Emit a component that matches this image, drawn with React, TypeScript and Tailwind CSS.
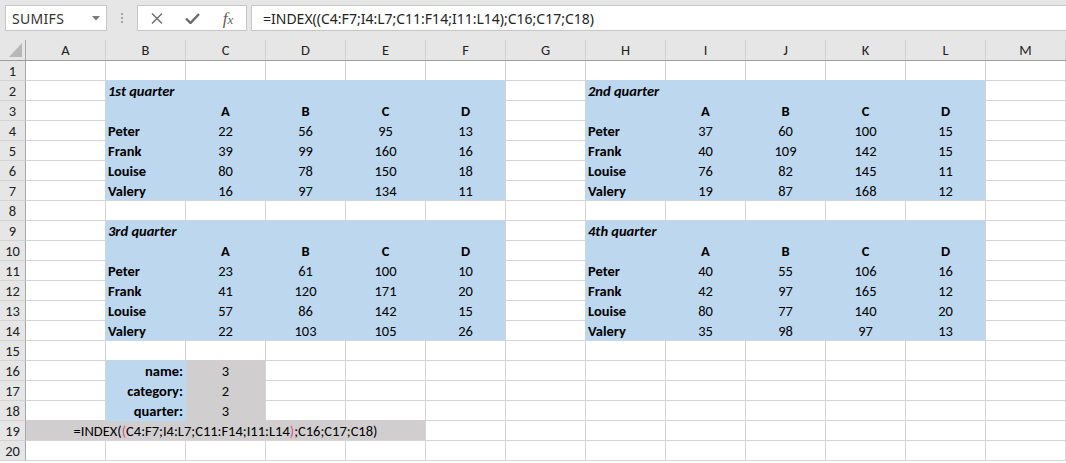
import React from "react";

type Fill = "blue" | "gray" | null;
type Cell = {
  text?: string;
  align?: "left" | "center" | "right";
  bold?: boolean;
  italic?: boolean;
  fill: Fill;
  span?: number;
  formula?: boolean;
  skip?: boolean;
};

const COLS = ["A", "B", "C", "D", "E", "F", "G", "H", "I", "J", "K", "L", "M"];
const NROWS = 20;

const bgClass: Record<string, string> = {
  blue: "bg-[#bdd7ee]",
  gray: "bg-[#d0cece]",
  none: "bg-white",
};
const rightClass: Record<string, string> = {
  blue: "border-r-[#bdd7ee]",
  gray: "border-r-[#d0cece]",
  none: "border-r-[#d4d4d4]",
};
const bottomClass: Record<string, string> = {
  blue: "border-b-[#bdd7ee]",
  gray: "border-b-[#d0cece]",
  none: "border-b-[#d4d4d4]",
};

function buildGrid(): Cell[][] {
  const g: Cell[][] = [];
  for (let r = 0; r < NROWS; r++) {
    const row: Cell[] = [];
    for (let c = 0; c < COLS.length; c++) row.push({ fill: null });
    g.push(row);
  }
  const put = (r: number, c: number, cell: Partial<Cell>) => {
    g[r - 1][c] = { ...g[r - 1][c], ...cell };
  };
  const table = (
    r0: number,
    c0: number,
    title: string,
    data: [string, number[]][]
  ) => {
    for (let r = r0; r < r0 + 6; r++)
      for (let c = c0; c < c0 + 5; c++) put(r, c, { fill: "blue" });
    put(r0, c0, { text: title, bold: true, italic: true, align: "left" });
    ["A", "B", "C", "D"].forEach((h, i) =>
      put(r0 + 1, c0 + 1 + i, { text: h, bold: true, align: "center" })
    );
    data.forEach(([name, vals], i) => {
      put(r0 + 2 + i, c0, { text: name, bold: true, align: "left" });
      vals.forEach((v, j) =>
        put(r0 + 2 + i, c0 + 1 + j, { text: String(v), align: "center" })
      );
    });
  };
  table(2, 1, "1st quarter", [
    ["Peter", [22, 56, 95, 13]],
    ["Frank", [39, 99, 160, 16]],
    ["Louise", [80, 78, 150, 18]],
    ["Valery", [16, 97, 134, 11]],
  ]);
  table(2, 7, "2nd quarter", [
    ["Peter", [37, 60, 100, 15]],
    ["Frank", [40, 109, 142, 15]],
    ["Louise", [76, 82, 145, 11]],
    ["Valery", [19, 87, 168, 12]],
  ]);
  table(9, 1, "3rd quarter", [
    ["Peter", [23, 61, 100, 10]],
    ["Frank", [41, 120, 171, 20]],
    ["Louise", [57, 86, 142, 15]],
    ["Valery", [22, 103, 105, 26]],
  ]);
  table(9, 7, "4th quarter", [
    ["Peter", [40, 55, 106, 16]],
    ["Frank", [42, 97, 165, 12]],
    ["Louise", [80, 77, 140, 20]],
    ["Valery", [35, 98, 97, 13]],
  ]);
  [
    ["name:", "3"],
    ["category:", "2"],
    ["quarter:", "3"],
  ].forEach(([l, v], i) => {
    put(16 + i, 1, { text: l, bold: true, align: "right", fill: "blue" });
    put(16 + i, 2, { text: v, align: "center", fill: "gray" });
  });
  put(19, 0, { fill: "gray", span: 5, formula: true, align: "center" });
  for (let c = 1; c < 5; c++) put(19, c, { fill: "gray", skip: true });
  return g;
}

const FONT = "font-['Carlito','Lato',sans-serif]";
const UIFONT = "font-['Noto_Sans','Open_Sans',sans-serif]";

function CellView({ cell, right, below }: { cell: Cell; right: Fill; below: Fill }) {
  const own = cell.fill;
  const rKey = own && right ? own : !own && right ? right : "none";
  const bKey = own && below ? own : !own && below ? below : "none";
  const justify =
    cell.align === "center"
      ? "justify-center"
      : cell.align === "right"
      ? "justify-end"
      : "justify-start";
  const span = cell.span === 5 ? "col-span-5" : "";
  return (
    <div
      className={`${span} border-r border-b ${rightClass[rKey]} ${bottomClass[bKey]} ${
        bgClass[own ?? "none"]
      } flex items-end ${justify} px-[2px] overflow-hidden whitespace-nowrap text-[14.5px] leading-[18px] text-black ${
        cell.bold ? "font-bold" : ""
      } ${cell.italic ? "italic" : ""}`}
    >
      {cell.formula ? (
        <span>
          =INDEX(<span className="text-[#e0577b]">(</span>C4:F7;I4:L7;C11:F14;I11:L14
          <span className="text-[#e0577b]">)</span>;C16;C17;C18)
        </span>
      ) : (
        cell.text
      )}
    </div>
  );
}

function Toolbar() {
  return (
    <div className={`h-[40px] bg-[#e6e6e6] flex items-start pt-[5px] ${UIFONT}`}>
      <div className="ml-[5px] w-[102px] h-[26px] bg-white border border-[#c6c6c6] flex items-center pl-[6px] pr-[6px] justify-between">
        <span className="text-[14px] text-[#333] tracking-[0.3px]">SUMIFS</span>
        <svg width="8" height="5" viewBox="0 0 8 5">
          <path d="M0 0 L8 0 L4 4.5 Z" fill="#7a7a7a" />
        </svg>
      </div>
      <div className="w-[30px] h-[26px] flex flex-col items-center justify-center gap-[2px]">
        <div className="w-[2px] h-[2px] bg-[#a6a6a6]" />
        <div className="w-[2px] h-[2px] bg-[#a6a6a6]" />
        <div className="w-[2px] h-[2px] bg-[#a6a6a6]" />
      </div>
      <div className="w-[110px] h-[26px] bg-white border border-[#c6c6c6] flex items-center">
        <div className="w-[36px] flex justify-center pl-[2px]">
          <svg width="12" height="11" viewBox="0 0 12 11">
            <path d="M1 0.5 L11 10.5 M11 0.5 L1 10.5" stroke="#6b6b6b" strokeWidth="1.4" />
          </svg>
        </div>
        <div className="w-[36px] flex justify-center">
          <svg width="15" height="11" viewBox="0 0 15 11">
            <path d="M1 5.5 L5.5 10 L14 1" stroke="#6b6b6b" strokeWidth="2.4" fill="none" />
          </svg>
        </div>
        <div className="w-[36px] flex justify-center">
          <span className="font-['Liberation_Serif',serif] italic text-[17px] text-[#5f5f5f] leading-none">
            f<span className="text-[13px]">x</span>
          </span>
        </div>
      </div>
      <div className="ml-[4px] flex-1 h-[26px] bg-white border-t border-b border-l border-[#c6c6c6] flex items-center pl-[11px]">
        <span className="text-[14px] text-[#222] whitespace-nowrap">
          =INDEX((C4:F7;I4:L7;C11:F14;I11:L14);C16;C17;C18)
        </span>
      </div>
    </div>
  );
}

export default function App() {
  const grid = buildGrid();
  return (
    <div className="w-[1066px] h-[463px] overflow-hidden bg-white">
      <Toolbar />
      {/* column headers */}
      <div className={`flex h-[21px] bg-[#e6e6e6] border-b border-[#9e9e9e] ${FONT}`}>
        <div className="w-[26px] h-[20px] border-r border-[#a8a8a8] relative flex-none">
          <svg className="absolute left-[9px] top-[3px]" width="14" height="15" viewBox="0 0 14 15">
            <path d="M13 0 L13 14 L0 14 Z" fill="#b7b7b7" />
          </svg>
        </div>
        {COLS.map((c) => (
          <div
            key={c}
            className="w-[80px] flex-none h-[20px] border-r border-[#cfcfcf] flex items-end justify-center pb-[1px] text-[14.5px] leading-[18px] text-[#222]"
          >
            {c}
          </div>
        ))}
      </div>
      {/* body */}
      <div className={`grid grid-cols-[26px_repeat(13,80px)] auto-rows-[20px] ${FONT}`}>
        {grid.map((row, r) => (
          <React.Fragment key={r}>
            <div className="bg-[#e6e6e6] border-r border-r-[#a8a8a8] border-b border-b-[#d4d4d4] flex items-end justify-center text-[14.5px] leading-[18px] text-[#222]">
              {r + 1}
            </div>
            {row.map((cell, c) => {
              if (cell.skip) return null;
              const span = cell.span ?? 1;
              const rightCell = row[c + span];
              const belowCell = r + 1 < grid.length ? grid[r + 1][c] : undefined;
              return (
                <CellView
                  key={c}
                  cell={cell}
                  right={rightCell ? rightCell.fill : null}
                  below={belowCell ? belowCell.fill : null}
                />
              );
            })}
          </React.Fragment>
        ))}
      </div>
    </div>
  );
}
